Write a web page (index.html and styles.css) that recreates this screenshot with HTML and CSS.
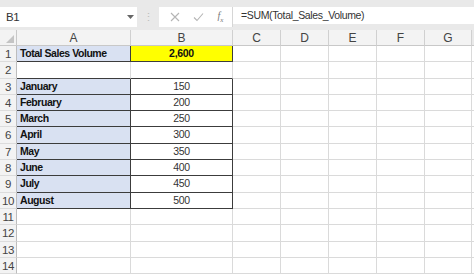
FILE: index.html
```html
<!DOCTYPE html>
<html>
  <head>
    <meta charset="UTF-8" />
    <title>Total Sales Volume</title>
    <link rel="stylesheet" href="styles.css">
  </head>
  <body>
    <div class="formula-bar">
      <div class="name-box">
        <span>B1</span>
        <svg width="7" height="4" viewBox="0 0 7 4"><path d="M0 0h7L3.5 4z" fill="#666"/></svg>
      </div>
      <div class="grip">&#8942;</div>
      <div class="fx-box">
        <!-- cancel / enter / insert function -->
        <svg width="10" height="10" viewBox="0 0 10 10"><path d="M1 1l8 8M9 1l-8 8" stroke="#b5b5b5" stroke-width="1.1"/></svg>
        <svg width="11" height="10" viewBox="0 0 11 10"><path d="M1 5.5l3 3L10 1.5" stroke="#b5b5b5" stroke-width="1.1" fill="none"/></svg>
        <span class="fx">f<sub>x</sub></span>
      </div>
      <div class="formula">=SUM(Total_Sales_Volume)</div>
    </div>

    <div class="sheet">
      <div class="corner"><svg width="8" height="8" viewBox="0 0 8 8"><path d="M8 0v8H0z" fill="#c4c4c4"/></svg></div>
      <div class="col-head">A</div>
      <div class="col-head">B</div>
      <div class="col-head">C</div>
      <div class="col-head">D</div>
      <div class="col-head">E</div>
      <div class="col-head">F</div>
      <div class="col-head">G</div>
      <div class="col-head edge"></div>

      <div class="row-head">1</div>
      <div class="cell label box">Total Sales Volume</div>
      <div class="cell total box">2,600</div>
      <div class="cell"></div><div class="cell"></div><div class="cell"></div><div class="cell"></div><div class="cell"></div><div class="cell edge"></div>

      <div class="row-head">2</div>
      <div class="cell top-of-box"></div>
      <div class="cell top-of-box"></div>
      <div class="cell"></div><div class="cell"></div><div class="cell"></div><div class="cell"></div><div class="cell"></div><div class="cell edge"></div>

      <div class="row-head">3</div>
      <div class="cell label box">January</div>
      <div class="cell num box">150</div>
      <div class="cell"></div><div class="cell"></div><div class="cell"></div><div class="cell"></div><div class="cell"></div><div class="cell edge"></div>

      <div class="row-head">4</div>
      <div class="cell label box">February</div>
      <div class="cell num box">200</div>
      <div class="cell"></div><div class="cell"></div><div class="cell"></div><div class="cell"></div><div class="cell"></div><div class="cell edge"></div>

      <div class="row-head">5</div>
      <div class="cell label box">March</div>
      <div class="cell num box">250</div>
      <div class="cell"></div><div class="cell"></div><div class="cell"></div><div class="cell"></div><div class="cell"></div><div class="cell edge"></div>

      <div class="row-head">6</div>
      <div class="cell label box">April</div>
      <div class="cell num box">300</div>
      <div class="cell"></div><div class="cell"></div><div class="cell"></div><div class="cell"></div><div class="cell"></div><div class="cell edge"></div>

      <div class="row-head">7</div>
      <div class="cell label box">May</div>
      <div class="cell num box">350</div>
      <div class="cell"></div><div class="cell"></div><div class="cell"></div><div class="cell"></div><div class="cell"></div><div class="cell edge"></div>

      <div class="row-head">8</div>
      <div class="cell label box">June</div>
      <div class="cell num box">400</div>
      <div class="cell"></div><div class="cell"></div><div class="cell"></div><div class="cell"></div><div class="cell"></div><div class="cell edge"></div>

      <div class="row-head">9</div>
      <div class="cell label box">July</div>
      <div class="cell num box">450</div>
      <div class="cell"></div><div class="cell"></div><div class="cell"></div><div class="cell"></div><div class="cell"></div><div class="cell edge"></div>

      <div class="row-head">10</div>
      <div class="cell label box">August</div>
      <div class="cell num box">500</div>
      <div class="cell"></div><div class="cell"></div><div class="cell"></div><div class="cell"></div><div class="cell"></div><div class="cell edge"></div>

      <div class="row-head">11</div>
      <div class="cell"></div><div class="cell"></div><div class="cell"></div><div class="cell"></div><div class="cell"></div><div class="cell"></div><div class="cell"></div><div class="cell edge"></div>

      <div class="row-head">12</div>
      <div class="cell"></div><div class="cell"></div><div class="cell"></div><div class="cell"></div><div class="cell"></div><div class="cell"></div><div class="cell"></div><div class="cell edge"></div>

      <div class="row-head">13</div>
      <div class="cell"></div><div class="cell"></div><div class="cell"></div><div class="cell"></div><div class="cell"></div><div class="cell"></div><div class="cell"></div><div class="cell edge"></div>

      <div class="row-head">14</div>
      <div class="cell"></div><div class="cell"></div><div class="cell"></div><div class="cell"></div><div class="cell"></div><div class="cell"></div><div class="cell"></div><div class="cell edge"></div>
    </div>
  </body>
</html>
```

FILE: styles.css
```css
body {
  margin: 0;
  font-family: "Liberation Sans", Arial, sans-serif;
  background: #ffffff;
  color: #222;
  overflow: hidden;
}
.formula-bar {
  display: flex;
  align-items: flex-start;
  height: 30px;
  padding-top: 7px;
  box-sizing: border-box;
  background: #e9e9e9;
}
.name-box {
  display: flex;
  align-items: center;
  justify-content: space-between;
  width: 137px;
  height: 20px;
  padding: 0 3px 0 6px;
  box-sizing: border-box;
  background: #fff;
  font-size: 11.5px;
  letter-spacing: -0.3px;
  color: #333;
}
.grip {
  width: 22px;
  text-align: center;
  font-size: 11px;
  line-height: 20px;
  color: #bdbdbd;
}
.fx-box {
  display: flex;
  align-items: center;
  justify-content: space-around;
  width: 74px;
  height: 20px;
  padding: 0 2px 0 4px;
  box-sizing: border-box;
  background: #fff;
  border-right: 1px solid #d6d6d6;
}
.fx {
  font-family: "Liberation Serif", serif;
  font-style: italic;
  font-size: 10px;
  color: #777;
}
.fx sub {
  font-size: 7px;
}
.formula {
  flex: 1;
  height: 17px;
  padding-left: 8px;
  background: #fff;
  font-size: 10.5px;
  letter-spacing: -0.35px;
  line-height: 16px;
  color: #333;
}
.sheet {
  display: grid;
  grid-template-columns: 17px 114px 102px 48px 48px 48px 48px 47px 1fr;
  grid-template-rows: 16px;
  grid-auto-rows: 16.3px;
}
.corner,
.col-head,
.row-head {
  background: #f3f3f3;
  color: #444;
  box-sizing: border-box;
  border-right: 1px solid #d0d0d0;
  border-bottom: 1px solid #c8c8c8;
}
.corner {
  display: flex;
  align-items: flex-end;
  justify-content: flex-end;
  padding: 0 2px 2px 0;
  border-right-color: #c8c8c8;
}
.col-head {
  text-align: center;
  font-size: 12px;
  line-height: 16px;
}
.row-head {
  text-align: center;
  font-size: 11.5px;
  letter-spacing: -0.4px;
  line-height: 16px;
  border-right-color: #bdbdbd;
  border-bottom-color: #dcdcdc;
}
.col-head.edge {
  border-right: none;
  background: #e9e9e9;
}
.cell {
  box-sizing: border-box;
  border-right: 1px solid #dadada;
  border-bottom: 1px solid #dadada;
  font-size: 10.5px;
  line-height: 15px;
  white-space: nowrap;
}
.cell.edge {
  border-right: none;
}
.box {
  border-right-color: #3c3c3c;
  border-bottom-color: #3c3c3c;
}
.top-of-box {
  border-bottom-color: #3c3c3c;
}
.label {
  padding-left: 3px;
  background: #d9e1f2;
  font-weight: bold;
  letter-spacing: -0.45px;
  color: #111;
}
.num {
  text-align: center;
  letter-spacing: -0.3px;
  color: #333;
}
.total {
  text-align: center;
  background: #ffff00;
  font-weight: bold;
  letter-spacing: -0.3px;
  color: #111;
}
```
